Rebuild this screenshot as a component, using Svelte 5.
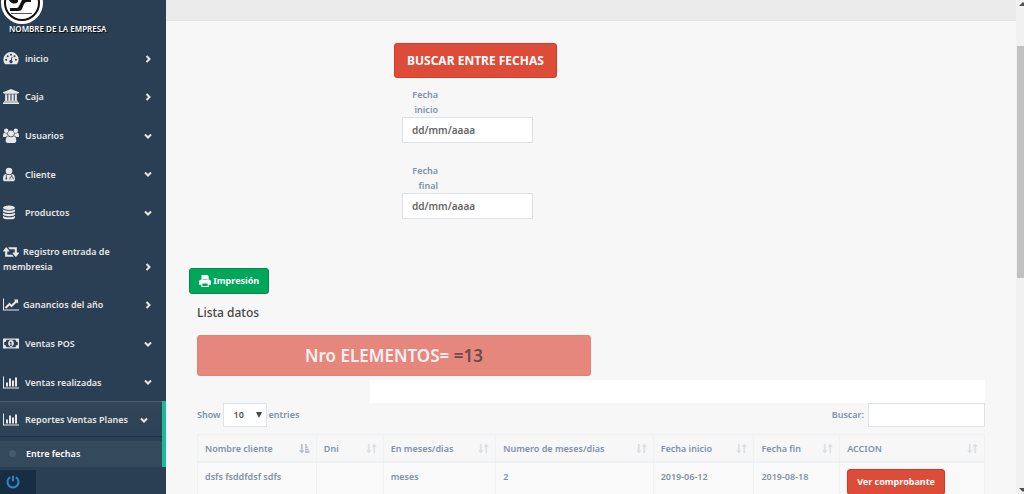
<script lang="ts">
	type MenuItem = {
		label: string;
		icon: string;
		closed?: boolean;
		tight?: boolean;
	};

	const menu: MenuItem[] = [
		{ label: "inicio", icon: "dashboard", closed: true },
		{ label: "Caja", icon: "bank", closed: true },
		{ label: "Usuarios", icon: "users" },
		{ label: "Cliente", icon: "doctor" },
		{ label: "Productos", icon: "database" },
		{ label: "Registro entrada de membresia", icon: "retweet", closed: true, tight: true },
		{ label: "Ganancios del año", icon: "line", closed: true, tight: true },
		{ label: "Ventas POS", icon: "money" },
		{ label: "Ventas realizadas", icon: "bars" },
	];

	const current: MenuItem = { label: "Reportes Ventas Planes", icon: "bars" };

	const columns = [
		{ label: "Nombre cliente", width: 15.1 },
		{ label: "Dni", width: 8.5 },
		{ label: "En meses/dias", width: 14.3 },
		{ label: "Numero de meses/dias", width: 20 },
		{ label: "Fecha inicio", width: 12.8 },
		{ label: "Fecha fin", width: 10.9 },
		{ label: "ACCION", width: 18.4 },
	];

	const rows = [["dsfs fsddfdsf sdfs", "", "meses", "2", "2019-06-12", "2019-08-18"]];

	let desde = $state("");
	let hasta = $state("");
	let buscar = $state("");
	let porPagina = $state("10");
</script>

{#snippet icon(name: string)}
	{#if name === "dashboard"}
		<svg class="icon" viewBox="0 0 16 14">
			<path fill="currentColor" fill-rule="evenodd" d="M8 .5a7.600 7.600 0 0 0-7.600 7.600c0 1.500.4 2.900 1.300 4.200.2.300.4.400.7.400h11.200c.3 0 .5-.1.7-.4.9-1.300 1.300-2.700 1.300-4.200A7.600 7.600 0 0 0 8 .5zM3.200 7.300a1 1 0 1 1 0 2 1 1 0 0 1 0-2zM4.700 3.800a1 1 0 1 1 0 2 1 1 0 0 1 0-2zM8 2.300a1 1 0 1 1 0 2 1 1 0 0 1 0-2zM11.500 3.800a1 1 0 1 1 0 2 1 1 0 0 1 0-2zM12.900 7.300a1 1 0 1 1 0 2 1 1 0 0 1 0-2zM8.600 5.300l.9.3-.7 3.200a1.600 1.600 0 1 1-1-.2z" />
		</svg>
	{:else if name === "bank"}
		<svg class="icon" viewBox="0 0 1920 1792">
			<path fill="currentColor" d="M960 0l960 384v128h-128q0 26-20.500 45t-48.500 19h-1526q-28 0-48.500-19t-20.500-45h-128v-128zm-704 640h256v768h128v-768h256v768h128v-768h256v768h128v-768h256v768h59q28 0 48.500 19t20.500 45v64h-1664v-64q0-26 20.500-45t48.500-19h59v-768zm1595 960q28 0 48.500 19t20.500 45v128h-1920v-128q0-26 20.500-45t48.500-19h1782z" />
		</svg>
	{:else if name === "users"}
		<svg class="icon" viewBox="0 0 16 15">
			<g fill="currentColor">
				<circle cx="3.200" cy="2.800" r="2.200" />
				<circle cx="12.800" cy="2.800" r="2.200" />
				<path d="M0 8.200C0 6 .5 4.800 1.500 4.800c.8.700 2.200.8 3 .3-.4 1.200-.1 2.100.4 2.900-1 0-1.800.4-2.300 1.100H1.500C.6 9.100 0 8.800 0 8.200zM16 8.200c0-2.200-.5-3.400-1.500-3.400-.8.700-2.200.8-3 .3.400 1.200.1 2.100-.4 2.900 1 0 1.800.4 2.300 1.100h1.100c.9 0 1.500-.3 1.500-.9z" />
				<circle cx="8" cy="5.500" r="3" />
				<path d="M2.700 12.800c0-2.700.8-4.500 2.600-4.500 1.500 1.300 3.900 1.300 5.400 0 1.800 0 2.600 1.800 2.600 4.500 0 1.300-.8 2.100-2.100 2.100H4.800c-1.300 0-2.100-.8-2.100-2.100z" />
			</g>
		</svg>
	{:else if name === "doctor"}
		<svg class="icon narrow" viewBox="0 0 12 14">
			<circle cx="6" cy="3.500" r="3.300" fill="currentColor" />
			<path fill="currentColor" d="M0 11.500C0 8.500.9 6.700 2.800 6.400c1.800 1.500 4.600 1.500 6.400 0 1.900.3 2.800 2.100 2.800 5.100 0 1.500-.8 2.300-2.200 2.300H2.200C.8 13.800 0 13 0 11.500z" />
			<path fill="none" stroke="#2a3f54" stroke-width=".8" d="M3.300 7.200v3M8.700 7.200v1.800M7 12v-1.500c0-1.900 3.200-1.900 3.200 0V12" />
			<circle cx="3.300" cy="11" r=".9" fill="#2a3f54" />
		</svg>
	{:else if name === "database"}
		<svg class="icon narrow" viewBox="0 0 12 14">
			<g fill="currentColor">
				<ellipse cx="6" cy="2.300" rx="6" ry="2.200" />
				<path d="M0 4c2.600 1.700 9.400 1.700 12 0v1.500c0 2.600-12 2.600-12 0zM0 7.200c2.600 1.700 9.400 1.700 12 0v1.500c0 2.600-12 2.600-12 0zM0 10.400c2.600 1.700 9.400 1.700 12 0v1.500c0 2.600-12 2.600-12 0z" />
			</g>
		</svg>
	{:else if name === "retweet"}
		<svg class="icon" viewBox="0 0 1920 1792">
			<path fill="currentColor" d="M1280 1504q0 13-9.500 22.500t-22.500 9.500h-960q-8 0-13.500-2t-9-7-5.500-8-3-11.500-1-11.500v-600h-192q-26 0-45-19t-19-45q0-24 15-41l320-384q19-22 49-22t49 22l320 384q15 17 15 41 0 26-19 45t-45 19h-192v384h576q16 0 25 11l160 192q7 10 7 21zm640-416q0 24-15 41l-320 384q-20 23-49 23t-49-23l-320-384q-15-17-15-41 0-26 19-45t45-19h192v-384h-576q-16 0-25-12l-160-192q-7-9-7-20 0-13 9.500-22.500t22.500-9.500h960q8 0 13.500 2t9 7 5.500 8 3 11.500 1 11.500v600h192q26 0 45 19t19 45z" />
		</svg>
	{:else if name === "line"}
		<svg class="icon" viewBox="0 0 2048 1792">
			<path fill="currentColor" d="M2048 1536v128h-2048v-1536h128v1408h1920zm-128-1248v435q0 21-19.500 29.500t-35.500-7.500l-121-121-633 633q-10 10-23 10t-23-10l-233-233-416 416-192-192 585-585q10-10 23-10t23 10l233 233 464-464-121-121q-16-16-7.500-35.500t29.500-19.500h435q14 0 23 9t9 23z" />
		</svg>
	{:else if name === "money"}
		<svg class="icon" viewBox="0 0 16 14">
			<path fill="currentColor" fill-rule="evenodd" d="M.5 2h15q.5 0 .5.5v9q0 .5-.5.500H.5Q0 12 0 11.500v-9Q0 2 .5 2zM3.500 3.200A2.300 2.300 0 0 1 1.200 5.500v3a2.300 2.300 0 0 1 2.300 2.300h9a2.300 2.300 0 0 1 2.300-2.300v-3a2.300 2.300 0 0 1-2.300-2.300z" />
			<path fill="currentColor" fill-rule="evenodd" d="M8 3.600c1.800 0 2.800 1.600 2.800 3.400s-1 3.400-2.800 3.400S5.200 8.800 5.200 7 6.200 3.600 8 3.600zM7.600 5.200l-1.100.9.500.6.500-.3v2.100h-.8v.8h2.600v-.8h-.8V5.200z" />
		</svg>
	{:else}
		<svg class="icon" viewBox="0 0 2048 1792">
			<path fill="currentColor" d="M640 896v512h-256v-512h256zm384-512v1024h-256v-1024h256zm1024 1152v128h-2048v-1536h128v1408h1920zm-640-896v768h-256v-768h256zm384-384v1152h-256v-1152h256z" />
		</svg>
	{/if}
{/snippet}

{#snippet entry(item: MenuItem)}
	<span class:tight={item.tight}>{@render icon(item.icon)}{item.label}</span>
	<svg class="chevron" viewBox="0 0 8 8">
		<path d={item.closed ? "M2.500 1L5.500 4L2.500 7" : "M1 2.500L4 5.500L7 2.500"} />
	</svg>
{/snippet}

<div class="page">
	<aside>
		<div class="brand">
			<svg class="logo" viewBox="0 0 44 24">
				<circle cx="22" cy="3" r="21" fill="#fff" />
				<circle cx="22" cy="3" r="17" fill="#fff" stroke="#111" stroke-width="2" />
				<path d="M9 0h9v2q-2 2-5 1.500Q10 3 9 0zM22 0h9v2h-4q-2 0-3 2l-2 5q-1 2-4 2h-8V8h7q1 0 2-2z" fill="#111" />
				<path d="M11 13.500h21" stroke="#555" stroke-width="1" />
			</svg>
			<strong>NOMBRE DE LA EMPRESA</strong>
		</div>

		<nav>
			{#each menu as item}
				<a href="#menu">{@render entry(item)}</a>
			{/each}
			<div class="group">
				<a href="#reportes" class="active">{@render entry(current)}</a>
				<a href="#entre-fechas" class="sub"><i></i>Entre fechas</a>
			</div>
		</nav>

		<footer>
			<button type="button" aria-label="Salir">
				<svg viewBox="0 0 14 14">
					<path d="M4.200 2.200a5.500 5.500 0 1 0 5.600 0M7 .8v5.400" />
				</svg>
			</button>
		</footer>
	</aside>

	<main>
		<div class="topbar"></div>

		<form class="filters">
			<button type="button" class="btn large">BUSCAR ENTRE FECHAS</button>
			<div class="field">
				<label for="desde">Fecha inicio</label>
				<input id="desde" type="text" placeholder="dd/mm/aaaa" bind:value={desde} />
			</div>
			<div class="field">
				<label for="hasta">Fecha final</label>
				<input id="hasta" type="text" placeholder="dd/mm/aaaa" bind:value={hasta} />
			</div>
		</form>

		<button type="button" class="btn green">
			<svg viewBox="0 0 12 12">
				<path fill="currentColor" fill-rule="evenodd" d="M2.500 0h5.800l1.400 1.500v3.300h.6Q12 4.800 12 6.500v3.300H9.700V12H2.300V9.800H0V6.500q0-1.700 1.700-1.700h.8zM3.500 5h5V4.600h-5zM3.400 8.500V11h5.200V8.500z" />
			</svg>
			Impresión
		</button>

		<section>
			<h1>Lista datos</h1>
			<div class="alert">Nro ELEMENTOS= <span>=13</span></div>
			<div class="blank"></div>

			<div class="controls">
				<label>
					Show
					<span class="select">
						<select bind:value={porPagina}>
							<option>10</option>
							<option>25</option>
							<option>50</option>
						</select>
						<svg viewBox="0 0 6 6"><path d="M0 0h6L3 6z" /></svg>
					</span>
					entries
				</label>
				<label>Buscar: <input type="search" bind:value={buscar} /></label>
			</div>

			<table>
				<thead>
					<tr>
						{#each columns as column, i}
							<th style:width="{column.width}%">
								<div>
									{column.label}
									<svg class="sort" class:sorted={i === 0} viewBox="0 0 12 12">
										<path d="M2 1h2v7h2L3 11.500 0 8h2z" />
										{#if i === 0}
											<path d="M6.500 1h2v2h-2zM6.500 3.500h3v2h-3zM6.500 6h4v2h-4zM6.500 8.500h5v2.500h-5z" />
										{:else}
											<path d="M8 11h2V4h2L9 .5 6 4h2z" />
										{/if}
									</svg>
								</div>
							</th>
						{/each}
					</tr>
				</thead>
				<tbody>
					{#each rows as row}
						<tr>
							{#each row as cell}
								<td>{cell}</td>
							{/each}
							<td><button type="button" class="btn">Ver comprobante</button></td>
						</tr>
					{/each}
				</tbody>
			</table>
		</section>
	</main>

	<div class="scroll" aria-hidden="true">
		<svg viewBox="0 0 8 6"><path d="M3 6l4-4 1 1v3z" /></svg>
		<div class="thumb"></div>
		<svg viewBox="0 0 8 6"><path d="M3 0l4 4 1-1V0z" /></svg>
	</div>
</div>

<style>
	:global(body) {
		overflow: hidden;
	}

	.page,
	.page * {
		box-sizing: border-box;
	}

	.page {
		display: flex;
		height: 100vh;
		overflow: hidden;
		background: #f7f7f7;
		color: #8091a7;
		font-family: "Noto Sans", "Open Sans", sans-serif;
		font-size: 9px;
		font-weight: 600;
		line-height: 15px;
	}

	button,
	input,
	select {
		font: inherit;
	}

	aside {
		display: flex;
		flex: 0 0 166px;
		flex-direction: column;
		background: #2a3f54;
		color: #e7e7e7;
	}

	.brand {
		display: flex;
		flex: none;
		flex-direction: column;
		height: 39px;
		color: #fff;
		font-size: 8px;
		line-height: 9px;
		text-shadow: 1px 1px 1px #000;
	}

	.brand strong {
		padding-left: 9px;
		font-weight: 600;
	}

	.logo {
		width: 44px;
		height: 24px;
	}

	nav {
		display: flex;
		flex: 1;
		flex-direction: column;
	}

	nav a {
		display: flex;
		flex: 1 0 auto;
		align-items: center;
		justify-content: space-between;
		padding: 11px 14px 11px 3px;
		color: inherit;
		text-decoration: none;
	}

	.group {
		display: flex;
		flex: 1 0 auto;
		flex-direction: column;
		border-right: 4px solid #1abb9c;
	}

	nav a.active {
		margin-bottom: 4px;
		padding: 9px 14px 8px 3px;
		border-top: 1px solid #506070;
		border-bottom: 1px solid #1f3347;
		background: linear-gradient(#334556, #2c4257);
	}

	nav a.sub {
		flex: 0 0 26px;
		justify-content: flex-start;
		gap: 10px;
		padding: 0 0 0 9px;
		background: #35495d;
		color: #fff;
	}

	.sub i {
		width: 7px;
		height: 7px;
		border-radius: 50%;
		background: #4a5b6b;
	}

	.icon {
		width: 16px;
		height: 15px;
		margin: -3px 6px -3px 0;
		vertical-align: -1px;
	}

	.icon.narrow {
		width: 12px;
		margin-right: 10px;
	}

	.tight .icon {
		margin-right: 4px;
	}

	.chevron {
		flex: none;
		align-self: flex-end;
		width: 8px;
		height: 8px;
		margin-bottom: 4px;
		fill: none;
		stroke: currentColor;
		stroke-width: 2;
	}

	footer {
		flex: none;
		padding-top: 3px;
	}

	footer button {
		display: block;
		width: 36px;
		height: 24px;
		padding: 4px 0 0 6px;
		border: 0;
		background: #172d44;
		text-align: left;
	}

	footer svg {
		width: 14px;
		height: 14px;
		fill: none;
		stroke: #2f86c0;
		stroke-width: 2;
	}

	main {
		flex: 1;
		min-width: 0;
	}

	.topbar {
		height: 21px;
		border-bottom: 1px solid #e3e5ec;
		background: #ebebeb;
	}

	.btn {
		padding: 4px 9px;
		border: 1px solid #d73925;
		border-radius: 3px;
		background: #dd4b39;
		color: #fff;
		font-weight: 700;
		line-height: 16px;
		white-space: nowrap;
	}

	.btn.large {
		padding: 8px 12px;
		font-size: 12px;
		line-height: 17px;
	}

	.btn.green {
		margin: 49px 0 0 23px;
		border-color: #008d4c;
		background: #00a65a;
	}

	.green svg {
		width: 12px;
		height: 12px;
		margin: -2px 0;
		vertical-align: -1px;
	}

	.filters {
		padding: 22px 0 0 228px;
	}

	.field {
		display: flex;
		flex-direction: column;
		width: 131px;
		margin: 9px 0 0 8px;
	}

	.field + .field {
		margin-top: 20px;
	}

	.field label {
		width: 36px;
		text-align: right;
	}

	input,
	select {
		border: 1px solid #dde2e8;
		border-radius: 0;
		background: #fff;
		color: #555;
	}

	.field input {
		width: 100%;
		height: 26px;
		padding: 0 9px;
		font-size: 10px;
	}

	input::placeholder {
		color: #666;
		opacity: 1;
	}

	section {
		padding: 0 31px;
	}

	h1 {
		margin: 9px 0 13px;
		color: #444;
		font-size: 12px;
		font-weight: 500;
		line-height: 19px;
	}

	.alert {
		width: 50%;
		padding: 8px;
		border: 1px solid #e38176;
		border-radius: 3px;
		background: #e5877c;
		color: #fcf1f0;
		font-size: 17px;
		line-height: 23px;
		text-align: center;
	}

	.alert span {
		color: #6c4b48;
	}

	.blank {
		width: 78%;
		height: 23px;
		margin: 4px 0 0 auto;
		background: #fff;
	}

	.controls {
		display: flex;
		justify-content: space-between;
		margin-bottom: 7px;
	}

	.controls label {
		display: flex;
		align-items: center;
		gap: 2px;
		line-height: 20px;
	}

	.controls input {
		width: 117px;
		height: 24px;
		margin-left: 2px;
	}

	.select {
		display: grid;
		align-items: center;
	}

	.select > * {
		grid-area: 1 / 1;
	}

	.select select {
		width: 44px;
		height: 24px;
		padding: 0 10px;
		appearance: none;
	}

	.select svg {
		justify-self: end;
		width: 6px;
		height: 6px;
		margin-right: 5px;
		fill: #444;
		pointer-events: none;
	}

	table {
		width: 100%;
		border: 1px solid #f0f1f2;
		border-collapse: collapse;
		table-layout: fixed;
	}

	th,
	td {
		border: 1px solid #f0f1f2;
		padding: 6px 6px 6px 7px;
		font-weight: 600;
		text-align: left;
		vertical-align: top;
		white-space: nowrap;
	}

	th {
		padding-bottom: 5px;
		border-bottom-width: 2px;
	}

	th div {
		display: flex;
		align-items: center;
		justify-content: space-between;
	}

	tbody tr {
		background: #f9f9f9;
	}

	.sort {
		width: 11px;
		height: 11px;
		fill: #dce0e6;
	}

	.sort.sorted {
		fill: #b8c1cd;
	}

	.scroll {
		display: flex;
		flex: 0 0 8px;
		flex-direction: column;
		align-items: flex-end;
		background: #f1f1f1;
	}

	.scroll svg {
		flex: none;
		width: 8px;
		height: 6px;
		fill: #505050;
	}

	.scroll svg:last-child {
		margin-top: auto;
	}

	.thumb {
		flex: 0 0 47%;
		width: 7px;
		margin-top: 40px;
		background: #c1c1c1;
	}
</style>
